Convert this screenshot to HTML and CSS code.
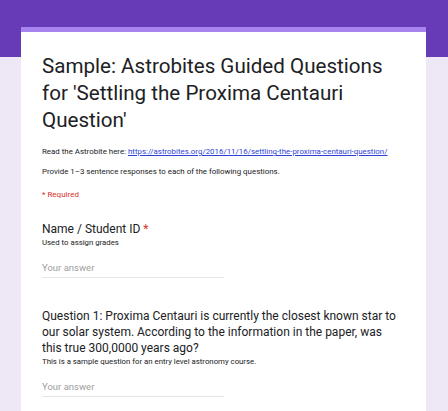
FILE: index.html
```html
<!DOCTYPE html>
<html lang="en">
<head>
<meta charset="utf-8">
<title>Sample: Astrobites Guided Questions</title>
<link rel="stylesheet" href="styles.css">
</head>
<body>
<div class="page">
  <div class="card">
    <h1 class="form-title">Sample: Astrobites Guided Questions for 'Settling the Proxima Centauri Question'</h1>
    <p class="desc first">Read the Astrobite here: <a href="#">https://astrobites.org/2016/11/16/settling-the-proxima-centauri-question/</a></p>
    <p class="desc">Provide 1–3 sentence responses to each of the following questions.</p>
    <p class="required">* Required</p>

    <div class="question q-name">
      <div class="q-title">Name / Student ID <span class="star">*</span></div>
      <div class="q-help">Used to assign grades</div>
      <div class="answer">Your answer</div>
    </div>

    <div class="question q-one">
      <div class="q-title">Question 1: Proxima Centauri is currently the closest known star to our solar system. According to the information in the paper, was this&nbsp;true 300,0000 years ago?</div>
      <div class="q-help">This is a sample question for an entry level astronomy course.</div>
      <div class="answer">Your answer</div>
    </div>
  </div>
</div>
</body>
</html>
```
FILE: styles.css
```css
html, body {
  margin: 0;
  padding: 0;
}
body {
  background: #ede7f6;
  font-family: Roboto, "Liberation Sans", Arial, sans-serif;
  color: #202124;
  overflow: hidden;
}
.page {
  background: linear-gradient(#673ab7 0, #673ab7 57px, #ede7f6 57px);
  padding: 27px 22px 0 21px;
  min-height: 411px;
  box-sizing: border-box;
}
.card {
  background: #fff;
  border-top: 5px solid #a783f0;
  padding: 21px 21px 40px 21px;
  min-height: 500px;
}
.form-title {
  margin: 0;
  font-size: 20.6px;
  font-weight: 400;
  line-height: 27px;
  color: #202124;
}
.desc {
  margin: 8px 0 0;
  font-size: 7.9px;
  line-height: 12px;
}
.desc.first {
  margin-top: 12px;
}
.desc a {
  color: #2f3fd8;
  text-decoration: underline;
}
.required {
  margin: 11px 0 0;
  font-size: 8px;
  line-height: 12px;
  color: #d93025;
}
.question {
  margin-top: 20px;
}
.q-one {
  margin-top: 30px;
}
.q-title {
  font-size: 12px;
  line-height: 16px;
  color: #202124;
}
.star {
  color: #d93025;
}
.q-help {
  font-size: 7.8px;
  line-height: 10px;
  margin-top: 1px;
}
.answer {
  width: 50%;
  margin-top: 13px;
  font-size: 9.5px;
  line-height: 14px;
  padding-bottom: 2px;
  color: #9e9e9e;
  border-bottom: 1px solid #e6e6e6;
}
```
